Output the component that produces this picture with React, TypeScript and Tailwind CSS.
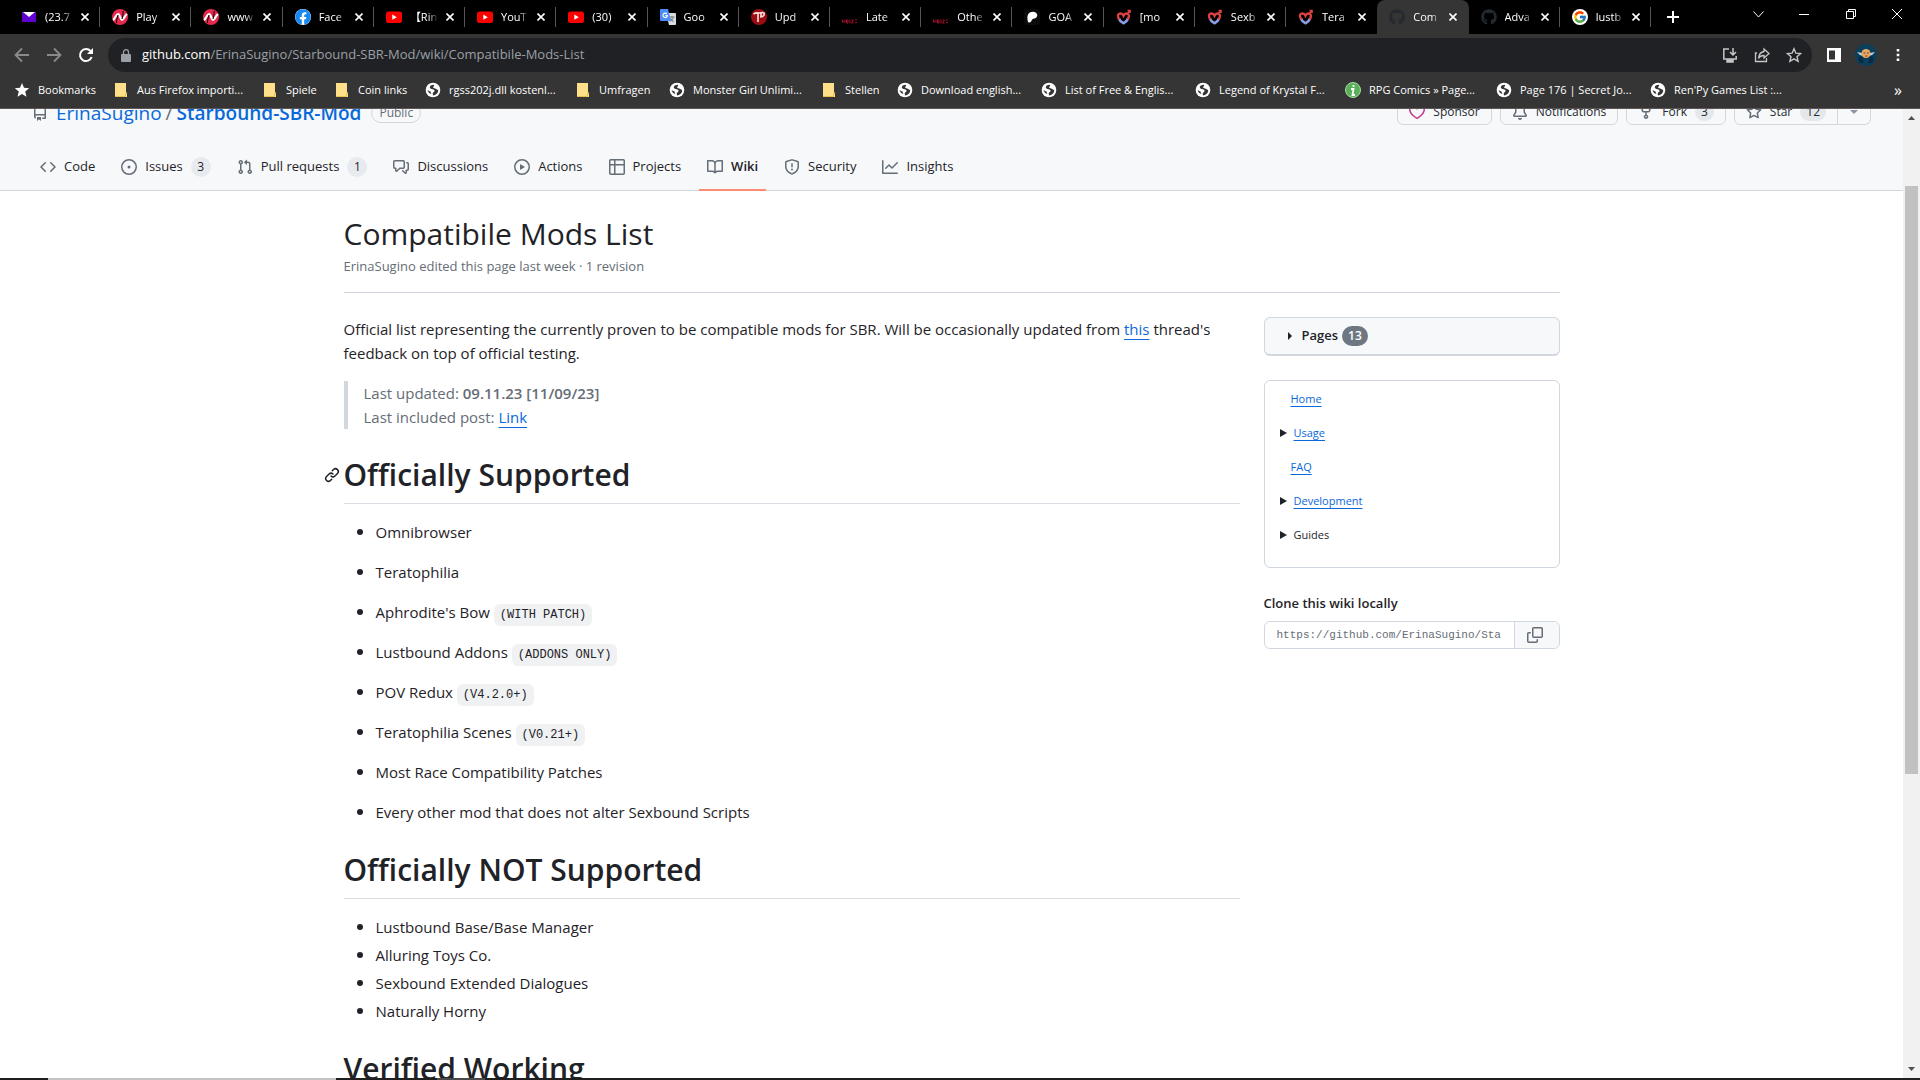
import React from "react";
import { FaFacebook, FaGithub } from "react-icons/fa";
import { FcGoogle } from "react-icons/fc";

const OCTICONS = {
  repo: "M2 2.5A2.5 2.5 0 0 1 4.5 0h8.75a.75.75 0 0 1 .75.75v12.5a.75.75 0 0 1-.75.75h-2.5a.75.75 0 0 1 0-1.5h1.75v-2h-8a1 1 0 0 0-.714 1.7.75.75 0 1 1-1.072 1.05A2.495 2.495 0 0 1 2 11.5Zm10.5-1h-8a1 1 0 0 0-1 1v6.708A2.486 2.486 0 0 1 4.5 9h8ZM5 12.25a.25.25 0 0 1 .25-.25h3.5a.25.25 0 0 1 .25.25v3.25a.25.25 0 0 1-.4.2l-1.45-1.087a.249.249 0 0 0-.3 0L5.4 15.7a.25.25 0 0 1-.4-.2Z",
  code: "m11.28 3.22 4.25 4.25a.75.75 0 0 1 0 1.06l-4.25 4.25a.749.749 0 0 1-1.275-.326.749.749 0 0 1 .215-.734L13.94 8l-3.72-3.72a.749.749 0 0 1 .326-1.275.749.749 0 0 1 .734.215Zm-6.56 0a.751.751 0 0 1 1.042.018.751.751 0 0 1 .018 1.042L2.06 8l3.72 3.72a.749.749 0 0 1-.326 1.275.749.749 0 0 1-.734-.215L.47 8.53a.75.75 0 0 1 0-1.06Z",
  issue: "M8 9.5a1.5 1.5 0 1 0 0-3 1.5 1.5 0 0 0 0 3ZM8 0a8 8 0 1 1 0 16A8 8 0 0 1 8 0ZM1.5 8a6.5 6.5 0 1 0 13 0 6.5 6.5 0 0 0-13 0Z",
  pull: "M1.5 3.25a2.25 2.25 0 1 1 3 2.122v5.256a2.251 2.251 0 1 1-1.5 0V5.372A2.25 2.25 0 0 1 1.5 3.25Zm5.677-.177L9.573.677A.25.25 0 0 1 10 .854V2.5h1A2.5 2.5 0 0 1 13.5 5v5.628a2.251 2.251 0 1 1-1.5 0V5a1 1 0 0 0-1-1h-1v1.646a.25.25 0 0 1-.427.177L7.177 3.427a.25.25 0 0 1 0-.354ZM3.75 2.5a.75.75 0 1 0 0 1.5.75.75 0 0 0 0-1.5Zm0 9.5a.75.75 0 1 0 0 1.5.75.75 0 0 0 0-1.5Zm8.25.75a.75.75 0 1 0 1.5 0 .75.75 0 0 0-1.5 0Z",
  discussion:
    "M1.75 1h8.5c.966 0 1.75.784 1.75 1.75v5.5A1.75 1.75 0 0 1 10.25 10H7.061l-2.574 2.573A1.458 1.458 0 0 1 2 11.543V10h-.25A1.75 1.75 0 0 1 0 8.25v-5.5C0 1.784.784 1 1.75 1ZM1.5 2.75v5.5c0 .138.112.25.25.25h1a.75.75 0 0 1 .75.75v2.19l2.72-2.72a.749.749 0 0 1 .53-.22h3.5a.25.25 0 0 0 .25-.25v-5.5a.25.25 0 0 0-.25-.25h-8.5a.25.25 0 0 0-.25.25Zm13 2a.25.25 0 0 0-.25-.25h-.5a.75.75 0 0 1 0-1.5h.5c.966 0 1.75.784 1.75 1.75v5.5A1.75 1.75 0 0 1 14.25 12H14v1.543a1.458 1.458 0 0 1-2.487 1.03L9.22 12.28a.749.749 0 0 1 .326-1.275.749.749 0 0 1 .734.215l2.22 2.22v-2.19a.75.75 0 0 1 .75-.75h1a.25.25 0 0 0 .25-.25Z",
  play: "M8 0a8 8 0 1 1 0 16A8 8 0 0 1 8 0ZM1.5 8a6.5 6.5 0 1 0 13 0 6.5 6.5 0 0 0-13 0Zm4.879-2.773 4.264 2.559a.25.25 0 0 1 0 .428l-4.264 2.559A.25.25 0 0 1 6 10.559V5.442a.25.25 0 0 1 .379-.215Z",
  table:
    "M0 1.75C0 .784.784 0 1.75 0h12.5C15.216 0 16 .784 16 1.75v12.5A1.75 1.75 0 0 1 14.25 16H1.75A1.75 1.75 0 0 1 0 14.25ZM6.5 6.5v8h7.75a.25.25 0 0 0 .25-.25V6.5Zm8-1.5V1.75a.25.25 0 0 0-.25-.25H6.5V5Zm-13 1.5v7.75c0 .138.112.25.25.25H5v-8ZM5 5V1.5H1.75a.25.25 0 0 0-.25.25V5Z",
  book: "M0 1.75A.75.75 0 0 1 .75 1h4.253c1.227 0 2.317.59 3 1.501A3.743 3.743 0 0 1 11.006 1h4.245a.75.75 0 0 1 .75.75v10.5a.75.75 0 0 1-.75.75h-4.507a2.25 2.25 0 0 0-1.591.659l-.622.621a.75.75 0 0 1-1.06 0l-.622-.621A2.25 2.25 0 0 0 5.258 13H.75a.75.75 0 0 1-.75-.75Zm7.251 10.324.004-5.073-.002-2.253A2.25 2.25 0 0 0 5.003 2.5H1.5v9h3.757a3.75 3.75 0 0 1 1.994.574ZM8.755 4.75l-.004 7.322a3.752 3.752 0 0 1 1.992-.572H14.5v-9h-3.495a2.25 2.25 0 0 0-2.25 2.25Z",
  shield:
    "M7.467.133a1.748 1.748 0 0 1 1.066 0l5.25 1.68A1.75 1.75 0 0 1 15 3.48V7c0 1.566-.32 3.182-1.303 4.682-.983 1.498-2.585 2.813-5.032 3.855a1.697 1.697 0 0 1-1.33 0c-2.447-1.042-4.049-2.357-5.032-3.855C1.32 10.182 1 8.566 1 7V3.48a1.75 1.75 0 0 1 1.217-1.667Zm.61 1.429a.25.25 0 0 0-.153 0l-5.25 1.68a.25.25 0 0 0-.174.238V7c0 1.358.275 2.666 1.057 3.86.784 1.194 2.121 2.34 4.366 3.297a.196.196 0 0 0 .154 0c2.245-.956 3.582-2.104 4.366-3.298C13.225 9.666 13.5 8.36 13.5 7V3.48a.251.251 0 0 0-.174-.237l-5.25-1.68ZM8.75 4.75v3a.75.75 0 0 1-1.5 0v-3a.75.75 0 0 1 1.5 0ZM9 10.5a1 1 0 1 1-2 0 1 1 0 0 1 2 0Z",
  graph:
    "M1.5 1.75V13.5h13.75a.75.75 0 0 1 0 1.5H.75a.75.75 0 0 1-.75-.75V1.75a.75.75 0 0 1 1.5 0Zm14.28 2.53-5.25 5.25a.75.75 0 0 1-1.06 0L7 7.06 4.28 9.78a.751.751 0 0 1-1.042-.018.751.751 0 0 1-.018-1.042l3.25-3.25a.75.75 0 0 1 1.06 0L10 7.94l4.72-4.72a.751.751 0 0 1 1.042.018.751.751 0 0 1 .018 1.042Z",
  copy: "M0 6.75C0 5.784.784 5 1.75 5h1.5a.75.75 0 0 1 0 1.5h-1.5a.25.25 0 0 0-.25.25v7.5c0 .138.112.25.25.25h7.5a.25.25 0 0 0 .25-.25v-1.5a.75.75 0 0 1 1.5 0v1.5A1.75 1.75 0 0 1 9.25 16h-7.5A1.75 1.75 0 0 1 0 14.25ZM5 1.75C5 .784 5.784 0 6.75 0h7.5C15.216 0 16 .784 16 1.75v7.5A1.75 1.75 0 0 1 14.25 11h-7.5A1.75 1.75 0 0 1 5 9.25Zm1.75-.25a.25.25 0 0 0-.25.25v7.5c0 .138.112.25.25.25h7.5a.25.25 0 0 0 .25-.25v-7.5a.25.25 0 0 0-.25-.25Z",
  link: "m7.775 3.275 1.25-1.25a3.5 3.5 0 1 1 4.95 4.95l-2.5 2.5a3.5 3.5 0 0 1-4.95 0 .751.751 0 0 1 .018-1.042.751.751 0 0 1 1.042-.018 1.998 1.998 0 0 0 2.83 0l2.5-2.5a2.002 2.002 0 0 0-2.83-2.83l-1.25 1.25a.751.751 0 0 1-1.042-.018.751.751 0 0 1-.018-1.042Zm-4.69 9.64a1.998 1.998 0 0 0 2.83 0l1.25-1.25a.751.751 0 0 1 1.042.018.751.751 0 0 1 .018 1.042l-1.25 1.25a3.5 3.5 0 1 1-4.95-4.95l2.5-2.5a3.5 3.5 0 0 1 4.95 0 .751.751 0 0 1-.018 1.042.751.751 0 0 1-1.042.018 1.998 1.998 0 0 0-2.83 0l-2.5 2.5a1.998 1.998 0 0 0 0 2.83Z",
  heart:
    "m8 14.25.345.666a.75.75 0 0 1-.69 0l-.008-.004-.018-.01a7.152 7.152 0 0 1-.31-.17 22.055 22.055 0 0 1-3.434-2.414C2.045 10.731 0 8.35 0 5.5 0 2.836 2.086 1 4.25 1 5.797 1 7.153 1.802 8 3.02 8.847 1.802 10.203 1 11.75 1 13.914 1 16 2.836 16 5.5c0 2.85-2.045 5.231-3.885 6.818a22.066 22.066 0 0 1-3.744 2.584l-.018.01-.006.003h-.002ZM4.25 2.5c-1.336 0-2.75 1.164-2.75 3 0 2.15 1.58 4.144 3.365 5.682A20.58 20.58 0 0 0 8 13.393a20.58 20.58 0 0 0 3.135-2.211C12.92 9.644 14.5 7.65 14.5 5.5c0-1.836-1.414-3-2.75-3-1.373 0-2.609.986-3.029 2.456a.749.749 0 0 1-1.442 0C6.859 3.486 5.623 2.5 4.25 2.5Z",
  bell: "M8 16a2 2 0 0 0 1.985-1.75c.017-.137-.097-.25-.235-.25h-3.5c-.138 0-.252.113-.235.25A2 2 0 0 0 8 16ZM3 5a5 5 0 0 1 10 0v2.947c0 .05.015.098.042.139l1.703 2.555A1.519 1.519 0 0 1 13.482 13H2.518a1.516 1.516 0 0 1-1.263-2.36l1.703-2.554A.255.255 0 0 0 3 7.947Zm5-3.5A3.5 3.5 0 0 0 4.5 5v2.947c0 .346-.102.683-.294.97l-1.703 2.556a.017.017 0 0 0-.003.01l.001.006c0 .002.002.004.004.006l.006.004.007.001h10.964l.007-.001.006-.004.004-.006.001-.007a.017.017 0 0 0-.003-.01l-1.703-2.554a1.745 1.745 0 0 1-.294-.97V5A3.5 3.5 0 0 0 8 1.5Z",
  fork: "M5 5.372v.878c0 .414.336.75.75.75h4.5a.75.75 0 0 0 .75-.75v-.878a2.25 2.25 0 1 1 1.5 0v.878a2.25 2.25 0 0 1-2.25 2.25h-1.5v2.128a2.251 2.251 0 1 1-1.5 0V8.5h-1.5A2.25 2.25 0 0 1 3.5 6.25v-.878a2.25 2.25 0 1 1 1.5 0ZM5 3.25a.75.75 0 1 0-1.5 0 .75.75 0 0 0 1.5 0Zm6.75.75a.75.75 0 1 0 0-1.5.75.75 0 0 0 0 1.5Zm-3 8.75a.75.75 0 1 0-1.5 0 .75.75 0 0 0 1.5 0Z",
  star: "M8 .25a.75.75 0 0 1 .673.418l1.882 3.815 4.21.612a.75.75 0 0 1 .416 1.279l-3.046 2.97.719 4.192a.751.751 0 0 1-1.088.791L8 12.347l-3.766 1.98a.75.75 0 0 1-1.088-.79l.72-4.194L.818 6.374a.75.75 0 0 1 .416-1.28l4.21-.611L7.327.668A.75.75 0 0 1 8 .25Zm0 2.445L6.615 5.5a.75.75 0 0 1-.564.41l-3.097.45 2.24 2.184a.75.75 0 0 1 .216.664l-.528 3.084 2.769-1.456a.75.75 0 0 1 .698 0l2.77 1.456-.53-3.084a.75.75 0 0 1 .216-.664l2.24-2.183-3.096-.45a.75.75 0 0 1-.564-.41L8 2.694Z",
  triangle:
    "m4.427 7.427 3.396 3.396a.25.25 0 0 0 .354 0l3.396-3.396A.25.25 0 0 0 11.396 7H4.604a.25.25 0 0 0-.177.427Z",
};

type IconName = keyof typeof OCTICONS;

function Octicon({ name, className = "" }: { name: IconName; className?: string }) {
  return (
    <svg viewBox="0 0 16 16" aria-hidden="true" className={`size-4 shrink-0 fill-current ${className}`}>
      <path d={OCTICONS[name]} />
    </svg>
  );
}

/* ---------- favicons ---------- */

const MailIcon = () => (
  <svg viewBox="0 0 16 16" className="size-4 shrink-0">
    <path d="M1 3h14v10H1z" fill="#6001d2" />
    <path d="M2 3h12L8 8z" fill="#fff" />
  </svg>
);

const WaveIcon = () => (
  <svg viewBox="0 0 16 16" className="size-4 shrink-0">
    <circle cx="8" cy="8" r="8" fill="#e62a4e" />
    <path d="M1 11c2-1 3-6 5-6s2.5 6 4 6 2.5-4 5-6" fill="none" stroke="#fff" strokeWidth="2.2" />
    <path d="M4.500 14c0-3 .5-5 1.500-8M10 10c.8-2 1-5 1.200-8" fill="none" stroke="#000" strokeWidth="1" />
  </svg>
);

const FacebookIcon = () => (
  <span className="grid size-4 shrink-0 place-items-center rounded-full bg-white">
    <FaFacebook className="size-4 text-[#1489f5]" />
  </span>
);

const YoutubeIcon = () => (
  <svg viewBox="0 0 16 16" className="size-4 shrink-0">
    <rect y="2.5" width="16" height="11.5" rx="2.5" fill="#f00" />
    <path d="M6.300 5.600v5.200L10.800 8.200z" fill="#fff" />
  </svg>
);

const TranslateIcon = () => (
  <svg viewBox="0 0 16 16" className="size-4 shrink-0">
    <path d="M6 4h9a1 1 0 0 1 1 1v10a1 1 0 0 1-1 1H9z" fill="#dadce0" />
    <path d="M9.500 8h5M12 7v1M10.500 12.500l3-4M10.500 9l3 4" stroke="#6b7a80" fill="none" />
    <path d="M1 0h7l3 12H1a1 1 0 0 1-1-1V1a1 1 0 0 1 1-1z" fill="#4e8df5" />
    <path d="M7 5A2.200 2.200 0 1 0 7.400 6.600H5.400" stroke="#fff" strokeWidth="1.1" fill="none" />
  </svg>
);

const TvIcon = () => (
  <svg viewBox="0 0 16 16" className="size-4 shrink-0">
    <circle cx="8" cy="8" r="8" fill="#9c0d13" />
    <path
      d="M2.500 5c2-1.500 4-1 5.500-1s3-1 5 0c.8 2-1 4-4 4M7 4.500v8.500M10 4.500v3"
      fill="none"
      stroke="#f3d9d4"
      strokeWidth="1.7"
    />
  </svg>
);

const NoiseIcon = () => (
  <svg viewBox="0 0 16 16" className="size-4 shrink-0">
    <path
      d="M.5 10.500v3M.5 11l2 2.500M3 10.500v3M4.500 11h1.500v3h-1.500zM8 10.500v4M9.500 11h2l-2 3h2M13 11h2M13 13.500h2"
      fill="none"
      stroke="#b3122f"
      strokeWidth=".9"
    />
  </svg>
);

const PatreonIcon = () => (
  <span className="grid size-4 shrink-0 place-items-center rounded bg-[#0b0b0b]">
    <svg viewBox="0 0 12 12" className="size-3">
      <path
        d="M2 11c-.8-3-1-6 .3-8C4 .6 8 .2 10 1.800c2 1.600 1.400 4-.3 5.200C8 8 6.500 7.400 5.800 9 5.200 10.600 4 12.400 2 11z"
        fill="#fff"
      />
    </svg>
  </span>
);

const LoversIcon = () => (
  <svg viewBox="0 0 16 16" className="size-4 shrink-0" fill="none">
    <path d="M2.800 9.500c1 2.500 2.800 4 4.700 4.700 2-.9 3.900-2.600 4.800-4.900" stroke="#8c9be6" strokeWidth="2.6" />
    <path
      d="M3.500 10.500C1.500 8 1.300 5.200 3.500 4.600c1.800-.4 3.300.6 4 2 .8-1.500 2.600-2.500 4.300-1.800 1.700.9 1.400 3.600-.3 5.700"
      stroke="#dc4340"
      strokeWidth="2.4"
    />
    <path d="M11.500 4.500 14 1.500M11.500 1.500H14V4" stroke="#dc4340" strokeWidth="1.6" />
  </svg>
);

const GithubIcon = () => <FaGithub className="size-4 shrink-0 text-[#24292f]" />;

const GoogleIcon = () => (
  <span className="grid size-4 shrink-0 place-items-center rounded-full bg-white">
    <FcGoogle className="size-3.5" />
  </span>
);

interface TabInfo {
  title: string;
  icon: () => React.ReactElement;
  active?: boolean;
}

const TABS: TabInfo[] = [
  { title: "(23.7", icon: MailIcon },
  { title: "Play", icon: WaveIcon },
  { title: "www", icon: WaveIcon },
  { title: "Face", icon: FacebookIcon },
  { title: "【Rin", icon: YoutubeIcon },
  { title: "YouT", icon: YoutubeIcon },
  { title: "(30)", icon: YoutubeIcon },
  { title: "Goo", icon: TranslateIcon },
  { title: "Upd", icon: TvIcon },
  { title: "Late", icon: NoiseIcon },
  { title: "Othe", icon: NoiseIcon },
  { title: "GOA", icon: PatreonIcon },
  { title: "[mo", icon: LoversIcon },
  { title: "Sexb", icon: LoversIcon },
  { title: "Tera", icon: LoversIcon },
  { title: "Com", icon: GithubIcon, active: true },
  { title: "Adva", icon: GithubIcon },
  { title: "lustb", icon: GoogleIcon },
];

function Tab({ tab, divider }: { tab: TabInfo; divider: boolean }) {
  const Icon = tab.icon;
  return (
    <div
      className={`relative flex min-w-0 flex-1 items-center pl-3 ${
        tab.active ? "rounded-t-lg bg-[#353535]" : ""
      }`}
    >
      <Icon />
      <span className="ml-2 w-7 shrink-0 overflow-hidden whitespace-nowrap text-[11px] text-white [mask-image:linear-gradient(to_right,#000_65%,transparent)]">
        {tab.title}
      </span>
      <button aria-label="Close tab" className="ml-1 grid size-4 shrink-0 place-items-center">
        <svg viewBox="0 0 8 8" className="size-2" stroke="#fff" strokeWidth="1.6">
          <path d="M.5.5l7 7M7.500.5l-7 7" />
        </svg>
      </button>
      {divider && <span className="absolute right-0 top-[7px] h-5 w-px bg-[#555]" />}
    </div>
  );
}

function TabStrip() {
  return (
    <div className="flex h-[34px] shrink-0 bg-black">
      <div className="ml-[9px] flex flex-1">
        {TABS.map((tab, i) => (
          <Tab key={i} tab={tab} divider={!tab.active && !TABS[i + 1]?.active} />
        ))}
      </div>
      <div className="flex w-[269px] text-white">
        <button aria-label="New tab" className="grid w-11 place-items-center">
          <svg viewBox="0 0 12 12" className="size-3" stroke="currentColor" strokeWidth="2">
            <path d="M6 0v12M0 6h12" />
          </svg>
        </button>
        <div className="ml-10 flex h-7 flex-1">
          <button aria-label="Search tabs" className="grid flex-1 place-items-center">
            <svg viewBox="0 0 11 7" className="h-[7px] w-[11px]" fill="none" stroke="currentColor">
              <path d="M.5.5l5 5.500 5-5.500" />
            </svg>
          </button>
          <button aria-label="Minimize" className="grid flex-1 place-items-center">
            <span className="h-px w-2.5 bg-white" />
          </button>
          <button aria-label="Restore" className="grid flex-1 place-items-center">
            <svg viewBox="0 0 10 10" className="size-2.5" fill="none" stroke="currentColor">
              <path d="M.5 2.500h7v7h-7zM2.500 2.500v-2h7v7h-2" />
            </svg>
          </button>
          <button aria-label="Close" className="grid flex-1 place-items-center">
            <svg viewBox="0 0 10 10" className="size-2.5" stroke="currentColor">
              <path d="M0 0l10 10M10 0L0 10" />
            </svg>
          </button>
        </div>
      </div>
    </div>
  );
}

function AddressBar() {
  return (
    <div className="flex h-[38px] shrink-0 items-end bg-[#353535]">
      <div className="flex h-[34px] w-[108px] items-center gap-4 pl-3.5">
        <button aria-label="Back" className="text-[#8a8a8a]">
          <svg viewBox="0 0 16 16" className="size-4" fill="none" stroke="currentColor" strokeWidth="1.8">
            <path d="M15 8H2M8 1.500L1.500 8 8 14.500" />
          </svg>
        </button>
        <button aria-label="Forward" className="text-[#8a8a8a]">
          <svg viewBox="0 0 16 16" className="size-4" fill="none" stroke="currentColor" strokeWidth="1.8">
            <path d="M1 8h13M8 1.500L14.500 8 8 14.500" />
          </svg>
        </button>
        <button aria-label="Reload" className="text-white">
          <svg viewBox="0 0 16 16" className="size-4" fill="none" stroke="currentColor" strokeWidth="2">
            <path d="M13.700 10A6 6 0 1 1 12.500 4" />
            <path d="M15 1v6H9z" fill="currentColor" stroke="none" />
          </svg>
        </button>
      </div>
      <div className="flex h-[34px] flex-1 items-center rounded-full bg-[#202124] pl-[13px] pr-2.5">
        <svg viewBox="0 0 10 13" className="h-[13px] w-2.5" fill="#9aa0a6">
          <path d="M1 5h8a1 1 0 0 1 1 1v6a1 1 0 0 1-1 1H1a1 1 0 0 1-1-1V6a1 1 0 0 1 1-1z" />
          <path d="M2.500 5.500V3.200a2.500 2.500 0 0 1 5 0v2.300" fill="none" stroke="#9aa0a6" strokeWidth="1.3" />
        </svg>
        <span className="ml-[11px] flex-1 text-[13px] text-[#9aa0a6]">
          <span className="text-white">github.com</span>/ErinaSugino/Starbound-SBR-Mod/wiki/Compatibile-Mods-List
        </span>
        <div className="flex gap-4 text-[#c4c7c5]">
          <button aria-label="Install">
            <svg viewBox="0 0 16 16" className="size-4" fill="none" stroke="currentColor" strokeWidth="1.5">
              <path d="M7 2H1.800v10h12.400V9M11 1v6.500M8 5l3 3 3-3" />
              <path d="M5 13h6v2H5z" fill="currentColor" />
            </svg>
          </button>
          <button aria-label="Share">
            <svg viewBox="0 0 16 16" className="size-4" fill="none" stroke="currentColor" strokeWidth="1.3">
              <path d="M3 6H1.500v8.500h11V11M10 2l5 4.500-5 4.500V8.500c-3 0-4.500 1-5.500 3C4.800 8 6.500 5 10 4.500z" />
            </svg>
          </button>
          <button aria-label="Bookmark this page">
            <svg viewBox="0 0 16 16" className="size-4" fill="none" stroke="currentColor" strokeWidth="1.4">
              <path d="M8 1.800l1.900 4.400 4.700.4-3.600 3.100 1.100 4.700L8 11.900l-4.100 2.500L5 9.700 1.400 6.600l4.700-.4z" />
            </svg>
          </button>
        </div>
      </div>
      <div className="flex h-[34px] w-[108px] items-center gap-4 pl-3.5">
        <button aria-label="Side panel">
          <svg viewBox="0 0 16 16" className="size-4">
            <path d="M1 1h14v14H1z" fill="#fff" />
            <path d="M3 3.500h6v9H3z" fill="#353535" />
          </svg>
        </button>
        <button aria-label="Profile" className="-mx-[3px]">
          <svg viewBox="0 0 22 22" className="size-[22px]">
            <circle cx="11" cy="11" r="11" fill="#0b3f5c" />
            <path d="M3 14c2-2 3-2 4-1l2 6H5zM19 14c-2-2-3-2-4-1l-2 6h4z" fill="#082c44" />
            <path d="M2 8l5 1 1 3-3-1zM20 8l-5 1-1 3 3-1z" fill="#c6d3d6" />
            <circle cx="11" cy="9.5" r="4.5" fill="#e7a765" />
            <path d="M8.500 9h2M12 9h2M10 12h2.500" stroke="#7a4520" />
          </svg>
        </button>
        <button aria-label="Menu">
          <svg viewBox="0 0 16 16" className="size-4" fill="#fff">
            <path d="M6.700 2h2.600v2.500H6.700zM6.700 6.800h2.600v2.500H6.700zM6.700 11.500h2.600V14H6.700z" />
          </svg>
        </button>
      </div>
    </div>
  );
}

const BOOKMARKS = [
  { label: "Bookmarks", kind: "star", width: "w-[99px]" },
  { label: "Aus Firefox importi...", kind: "folder", width: "w-[149px]" },
  { label: "Spiele", kind: "folder", width: "w-[72px]" },
  { label: "Coin links", kind: "folder", width: "w-[91px]" },
  { label: "rgss202j.dll kostenl...", kind: "globe", width: "w-[150px]" },
  { label: "Umfragen", kind: "folder", width: "w-[94px]" },
  { label: "Monster Girl Unlimi...", kind: "globe", width: "w-[152px]" },
  { label: "Stellen", kind: "folder", width: "w-[76px]" },
  { label: "Download english...", kind: "globe", width: "w-[144px]" },
  { label: "List of Free & Englis...", kind: "globe", width: "w-[154px]" },
  { label: "Legend of Krystal F...", kind: "globe", width: "w-[150px]" },
  { label: "RPG Comics » Page...", kind: "comics", width: "w-[151px]" },
  { label: "Page 176 | Secret Jo...", kind: "globe", width: "w-[154px]" },
  { label: "Ren'Py Games List :...", kind: "globe", width: "w-[150px]" },
];

function BookmarkIcon({ kind }: { kind: string }) {
  if (kind === "star") {
    return (
      <svg viewBox="0 0 16 16" className="size-4 shrink-0" fill="#fff">
        <path d="M8 1l2 4.800 5.200.4-4 3.400 1.300 5.100L8 12l-4.500 2.700 1.300-5.100-4-3.400L6 5.800z" />
      </svg>
    );
  }
  if (kind === "folder") {
    return (
      <svg viewBox="0 0 16 16" className="size-4 shrink-0">
        <path d="M2 1h11v9.500h1V15H2z" fill="#ffe08a" />
        <path d="M2 14.500h10.500V11.500h1.500" fill="none" stroke="#e8bf4c" />
      </svg>
    );
  }
  if (kind === "comics") {
    return (
      <svg viewBox="0 0 16 16" className="size-4 shrink-0">
        <circle cx="8" cy="8" r="7.5" fill="#5aaf5a" stroke="#a5dba3" />
        <path d="M8.500 3v2M6 7h2.500L7.500 13H10" fill="none" stroke="#fff" strokeWidth="1.8" />
      </svg>
    );
  }
  return (
    <svg viewBox="0 0 16 16" className="size-4 shrink-0">
      <circle cx="8" cy="8" r="7.3" fill="#fff" />
      <path
        d="M9 2.800C6.500 2.800 4.500 4 4.800 5.600 5.200 7.300 7.500 7 9 7.800c1.200.8.300 2.200-.8 2.700-.7.500-.4 1.800-.2 3 2.700-.3 5-2.200 5.300-4.800-.8-1.500-2.300-1.700-3.300-2.200S8 6 8.200 5.200c.2-.9 1.300-1 .8-2.400zM2.600 8.200l2.900 1.300.8 2.600-1.200-.6c-1.300-.8-2.200-1.900-2.500-3.300z"
        fill="#353535"
      />
    </svg>
  );
}

function BookmarksBar() {
  return (
    <nav className="flex h-[37px] shrink-0 items-center border-b border-[#5c5655] bg-[#353535] pl-3.5 text-[11px] text-white">
      {BOOKMARKS.map((item) => (
        <a key={item.label} href="#" className={`flex shrink-0 items-center gap-2 whitespace-nowrap ${item.width}`}>
          <BookmarkIcon kind={item.kind} />
          {item.label}
        </a>
      ))}
      <button aria-label="More bookmarks" className="ml-auto mr-[18px] text-base">
        »
      </button>
    </nav>
  );
}

/* ---------- repository page ---------- */

const NAV_ITEMS: { label: string; icon: IconName; count?: number; current?: boolean }[] = [
  { label: "Code", icon: "code" },
  { label: "Issues", icon: "issue", count: 3 },
  { label: "Pull requests", icon: "pull", count: 1 },
  { label: "Discussions", icon: "discussion" },
  { label: "Actions", icon: "play" },
  { label: "Projects", icon: "table" },
  { label: "Wiki", icon: "book", current: true },
  { label: "Security", icon: "shield" },
  { label: "Insights", icon: "graph" },
];

const actionButton =
  "flex h-7 items-center gap-2 rounded-md border border-[#d5d8da] bg-[#f6f8fa] px-[11px] pt-0.5 text-xs font-medium text-[#24292f]";

function RepoHeader() {
  return (
    <header className="-mt-[13px] border-b border-[#d0d7de] bg-[#f6f8fa] px-8">
      <div className="flex h-[30px] items-center justify-between">
        <div className="flex items-center pt-1 text-[19px] text-[#0969da]">
          <Octicon name="repo" className="mr-2 text-[#656d76]" />
          <a href="#">ErinaSugino</a>
          <span className="mx-1 text-[#656d76]">/</span>
          <a href="#" className="font-semibold">
            Starbound-SBR-Mod
          </a>
          <span className="ml-2.5 rounded-full border border-[#d0d7de] px-[7px] text-xs/[18px] font-medium text-[#656d76]">
            Public
          </span>
        </div>
        <div className="flex gap-2">
          <button className={actionButton}>
            <Octicon name="heart" className="text-[#bf3989]" />
            Sponsor
          </button>
          <button className={actionButton}>
            <Octicon name="bell" className="text-[#656d76]" />
            Notifications
          </button>
          <button className={actionButton}>
            <Octicon name="fork" className="text-[#656d76]" />
            Fork
            <span className="rounded-full bg-[#e5e8ea] px-1.5 leading-[18px]">3</span>
          </button>
          <div className="flex">
            <button className={`${actionButton} rounded-r-none`}>
              <Octicon name="star" className="text-[#656d76]" />
              Star
              <span className="rounded-full bg-[#e5e8ea] px-1.5 leading-[18px]">12</span>
            </button>
            <button
              aria-label="Lists"
              className="h-7 rounded-r-md border border-l-0 border-[#d5d8da] px-2 text-[#8c959f]"
            >
              <Octicon name="triangle" />
            </button>
          </div>
        </div>
      </div>
      <nav className="mt-[18px] flex h-[46px] gap-2.5">
        {NAV_ITEMS.map((item) => (
          <a
            key={item.label}
            href="#"
            className={`-mb-px flex items-center gap-2 border-b-2 px-2 text-[13px] text-[#1f2328] ${
              item.current ? "border-[#fd8c73] font-semibold" : "border-transparent"
            }`}
          >
            <Octicon name={item.icon} className="text-[#656d76]" />
            {item.label}
            {item.count && (
              <span className="min-w-5 rounded-full bg-[#e7eaee] px-1.5 text-center text-xs/5 font-medium">
                {item.count}
              </span>
            )}
          </a>
        ))}
      </nav>
    </header>
  );
}

const SUPPORTED: { name: string; note?: string }[] = [
  { name: "Omnibrowser" },
  { name: "Teratophilia" },
  { name: "Aphrodite's Bow", note: "(WITH PATCH)" },
  { name: "Lustbound Addons", note: "(ADDONS ONLY)" },
  { name: "POV Redux", note: "(V4.2.0+)" },
  { name: "Teratophilia Scenes", note: "(V0.21+)" },
  { name: "Most Race Compatibility Patches" },
  { name: "Every other mod that does not alter Sexbound Scripts" },
];

const NOT_SUPPORTED = [
  "Lustbound Base/Base Manager",
  "Alluring Toys Co.",
  "Sexbound Extended Dialogues",
  "Naturally Horny",
];

const linkClass = "text-[#0969da] underline underline-offset-4";

function SectionHeading({ children, anchor = false }: { children: React.ReactNode; anchor?: boolean }) {
  return (
    <h2 className="relative mb-4 mt-6 border-b border-[#d8dee4] pb-1.5 text-3xl/11 font-semibold">
      {anchor && (
        <a href="#officially-supported" aria-label="Permalink" className="absolute -left-5 top-3.5">
          <Octicon name="link" />
        </a>
      )}
      {children}
    </h2>
  );
}

function WikiBody() {
  return (
    <article className="min-w-0 flex-1 text-[15px]/6">
      <p>
        Official list representing the currently proven to be compatible mods for SBR. Will be occasionally updated
        from{" "}
        <a href="#" className={linkClass}>
          this
        </a>{" "}
        thread's feedback on top of official testing.
      </p>
      <blockquote className="mt-4 border-l-4 border-[#d0d7de] pl-4 text-[#656d76]">
        Last updated: <strong className="font-semibold">09.11.23 [11/09/23]</strong>
        <br />
        Last included post:{" "}
        <a href="#" className={linkClass}>
          Link
        </a>
      </blockquote>

      <SectionHeading anchor>Officially Supported</SectionHeading>
      <ul className="list-disc space-y-4 pl-8 marker:text-[18px] marker:leading-4">
        {SUPPORTED.map((mod) => (
          <li key={mod.name}>
            {mod.name}
            {mod.note && (
              <>
                {" "}
                <code className="rounded-md bg-[#eff1f3] px-1.5 py-1 font-['Liberation_Mono',monospace] text-xs">
                  {mod.note}
                </code>
              </>
            )}
          </li>
        ))}
      </ul>

      <SectionHeading>Officially NOT Supported</SectionHeading>
      <ul className="list-disc space-y-1 pl-8 marker:text-[18px] marker:leading-4">
        {NOT_SUPPORTED.map((name) => (
          <li key={name}>{name}</li>
        ))}
      </ul>

      <SectionHeading>Verified Working</SectionHeading>
    </article>
  );
}

const SIDEBAR_LINKS = [
  { label: "Home", link: true },
  { label: "Usage", link: true, expandable: true },
  { label: "FAQ", link: true },
  { label: "Development", link: true, expandable: true },
  { label: "Guides", expandable: true },
];

function Sidebar() {
  return (
    <aside className="w-[296px] shrink-0">
      <button className="flex h-[39px] w-full items-center rounded-md border border-b-2 border-[#d0d7de] bg-[#f6f8fa] pl-[23px] text-[13px] font-semibold">
        <svg viewBox="0 0 4 8" className="mr-2.5 h-2 w-1" fill="#1f2328">
          <path d="M0 0l4 4-4 4z" />
        </svg>
        Pages
        <span className="ml-1 rounded-full bg-[#6e7781] px-1.5 text-xs/5 text-white">13</span>
      </button>

      <ul className="mt-6 space-y-4 rounded-md border border-[#d0d7de] px-[15px] pb-[23px] pt-[9px] text-[11px]/[18px]">
        {SIDEBAR_LINKS.map((item) => (
          <li key={item.label} className={`flex items-center gap-1.5 ${item.expandable ? "" : "pl-[11px]"}`}>
            {item.expandable && (
              <svg viewBox="0 0 8 8" className="size-2" fill="#1f2328">
                <path d="M0 0l7 4-7 4z" />
              </svg>
            )}
            {item.link ? (
              <a href="#" className="text-[#0969da] underline underline-offset-3">
                {item.label}
              </a>
            ) : (
              item.label
            )}
          </li>
        ))}
      </ul>

      <label htmlFor="clone-url" className="mt-[23px] block text-[13px]/6 font-semibold">
        Clone this wiki locally
      </label>
      <div className="mt-1.5 flex h-7 rounded-md border border-[#d0d7de]">
        <input
          id="clone-url"
          readOnly
          value="https://github.com/ErinaSugino/Sta"
          className="min-w-0 flex-1 px-3 font-['Liberation_Mono',monospace] text-[11px] text-[#656d76]"
        />
        <button
          aria-label="Copy"
          className="flex w-[45px] items-center rounded-r-md border-l border-[#d0d7de] bg-[#f6f8fa] pl-3 text-[#656d76]"
        >
          <Octicon name="copy" />
        </button>
      </div>
    </aside>
  );
}

function Scrollbar() {
  return (
    <div className="flex w-[17px] shrink-0 flex-col items-center bg-[#f1f1f1]">
      <svg viewBox="0 0 17 17" className="size-[17px]" fill="#505050">
        <path d="M5 11l3.500-4 3.500 4z" />
      </svg>
      <div className="mt-[60px] h-[588px] w-[13px] bg-[#c1c1c1]" />
      <svg viewBox="0 0 17 17" className="mt-auto size-[17px]" fill="#505050">
        <path d="M5 6l3.500 4L12 6z" />
      </svg>
    </div>
  );
}

export default function App() {
  return (
    <div className="flex h-screen flex-col overflow-hidden bg-white font-['Open_Sans','Noto_Sans_CJK_JP',sans-serif] text-[#1f2328]">
      <TabStrip />
      <AddressBar />
      <BookmarksBar />
      <div className="flex min-h-0 flex-1">
        <div className="min-w-0 flex-1 overflow-hidden">
          <RepoHeader />
          <main className="mx-auto max-w-[1280px] px-8 pt-6">
            <div className="border-b border-[#d0d7de] pb-4">
              <h1 className="text-3xl/[38px]">Compatibile Mods List</h1>
              <p className="mt-[3px] text-[13px]/5 text-[#656d76]">
                ErinaSugino edited this page last week · 1 revision
              </p>
            </div>
            <div className="mt-6 flex gap-6">
              <WikiBody />
              <Sidebar />
            </div>
          </main>
        </div>
        <Scrollbar />
      </div>
      <div className="flex h-[2px] shrink-0 bg-[#1f1f1f]">
        <div className="ml-12 w-72 bg-[#c4c4c4]" />
        <div className="ml-[101px] w-12 bg-[#4a4a4a]" />
      </div>
    </div>
  );
}
